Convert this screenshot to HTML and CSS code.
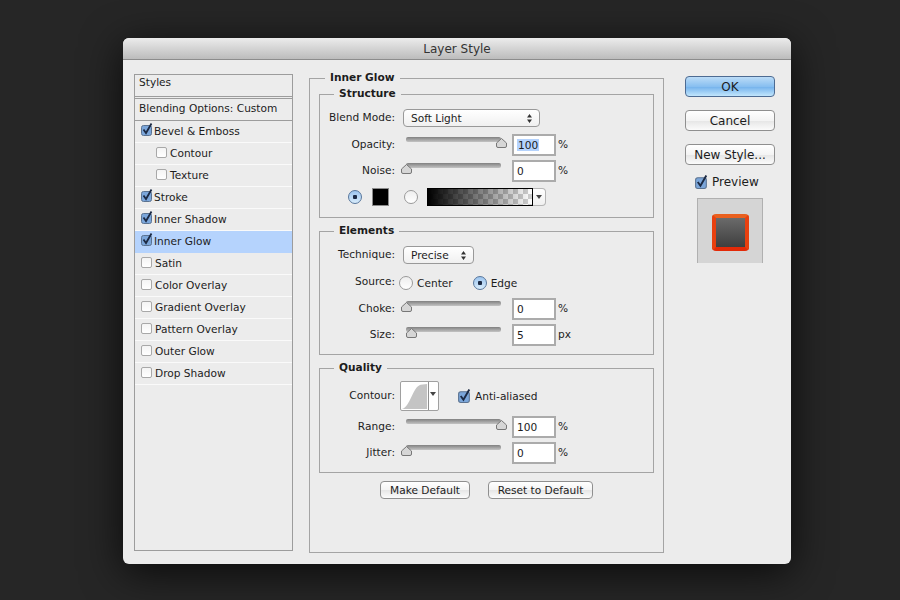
FILE: index.html
```html
<!DOCTYPE html>
<html lang="en">
<head>
    <meta charset="UTF-8">
    <meta name="viewport" content="width=device-width, initial-scale=1.0">
    <title>Layer Style</title>
    <link rel="stylesheet" href="styles.css">
</head>
<body>
    <svg class="defs" width="0" height="0">
        <symbol id="tick" viewBox="0 0 14 14">
            <rect x="1.5" y="3.5" width="10" height="10" rx="2" fill="#7ba6da" stroke="#5b7391"/>
            <path d="M3.5 7.5 L6 11 L11.5 1.5" fill="none" stroke="#1c2a44" stroke-width="1.8"/>
        </symbol>
        <symbol id="arrows" viewBox="0 0 7 11">
            <path d="M3.5 1 L6 4.5 H1 Z M3.5 10 L6 6.5 H1 Z" fill="#333"/>
        </symbol>
        <symbol id="thumb" viewBox="0 0 11 10">
            <path d="M5.5 .5 L10.5 5 V8 Q10.5 9.5 9 9.5 H2 Q.5 9.5 .5 8 V5 Z" fill="#d6d6d6" stroke="#777"/>
        </symbol>
    </svg>

    <div class="dialog">
        <div class="titlebar">Layer Style</div>
        <div class="main">
            <div class="style-list">
                <div class="list-head">Styles</div>
                <div class="list-head blending">Blending Options: Custom</div>
                <div class="item"><svg class="tick"><use href="#tick"/></svg>Bevel &amp; Emboss</div>
                <div class="item sub"><span class="box"></span>Contour</div>
                <div class="item sub"><span class="box"></span>Texture</div>
                <div class="item"><svg class="tick"><use href="#tick"/></svg>Stroke</div>
                <div class="item"><svg class="tick"><use href="#tick"/></svg>Inner Shadow</div>
                <div class="item selected"><svg class="tick"><use href="#tick"/></svg>Inner Glow</div>
                <div class="item"><span class="box"></span>Satin</div>
                <div class="item"><span class="box"></span>Color Overlay</div>
                <div class="item"><span class="box"></span>Gradient Overlay</div>
                <div class="item"><span class="box"></span>Pattern Overlay</div>
                <div class="item"><span class="box"></span>Outer Glow</div>
                <div class="item"><span class="box"></span>Drop Shadow</div>
            </div>

            <fieldset class="panel">
                <legend>Inner Glow</legend>

                <fieldset class="group structure">
                    <legend>Structure</legend>
                    <div class="row select-row">
                        <label>Blend Mode:</label>
                        <div class="select blend">Soft Light<svg class="arrows"><use href="#arrows"/></svg></div>
                    </div>
                    <div class="row">
                        <label>Opacity:</label>
                        <div class="slider"><svg class="thumb" style="left: 96px"><use href="#thumb"/></svg></div>
                        <div class="input"><span class="highlight">100</span></div>
                        <span class="unit">%</span>
                    </div>
                    <div class="row">
                        <label>Noise:</label>
                        <div class="slider"><svg class="thumb" style="left: 1px"><use href="#thumb"/></svg></div>
                        <div class="input">0</div>
                        <span class="unit">%</span>
                    </div>
                    <div class="fill-row">
                        <span class="radio on"></span>
                        <span class="swatch"></span>
                        <span class="radio"></span>
                        <span class="gradient"></span>
                        <span class="gradient-drop"></span>
                    </div>
                </fieldset>

                <fieldset class="group elements">
                    <legend>Elements</legend>
                    <div class="row select-row">
                        <label>Technique:</label>
                        <div class="select technique">Precise<svg class="arrows"><use href="#arrows"/></svg></div>
                    </div>
                    <div class="row source-row">
                        <label>Source:</label>
                        <span class="radio"></span><span class="radio-text center">Center</span>
                        <span class="radio on"></span><span class="radio-text">Edge</span>
                    </div>
                    <div class="row">
                        <label>Choke:</label>
                        <div class="slider"><svg class="thumb" style="left: 1px"><use href="#thumb"/></svg></div>
                        <div class="input">0</div>
                        <span class="unit">%</span>
                    </div>
                    <div class="row">
                        <label>Size:</label>
                        <div class="slider"><svg class="thumb" style="left: 6px"><use href="#thumb"/></svg></div>
                        <div class="input">5</div>
                        <span class="unit">px</span>
                    </div>
                </fieldset>

                <fieldset class="group quality">
                    <legend>Quality</legend>
                    <div class="row contour-row">
                        <label>Contour:</label>
                        <div class="contour">
                            <svg class="curve" viewBox="0 0 29 28">
                                <path d="M1 28 C10 26 12 5 21 2 L28 1 V28 Z" fill="#c4c4c4"/>
                            </svg>
                            <span class="contour-drop"></span>
                        </div>
                        <svg class="tick big"><use href="#tick"/></svg>
                        <span class="aa-text">Anti-aliased</span>
                    </div>
                    <div class="row">
                        <label>Range:</label>
                        <div class="slider"><svg class="thumb" style="left: 96px"><use href="#thumb"/></svg></div>
                        <div class="input">100</div>
                        <span class="unit">%</span>
                    </div>
                    <div class="row">
                        <label>Jitter:</label>
                        <div class="slider"><svg class="thumb" style="left: 1px"><use href="#thumb"/></svg></div>
                        <div class="input">0</div>
                        <span class="unit">%</span>
                    </div>
                </fieldset>

                <div class="defaults">
                    <button class="small make">Make Default</button>
                    <button class="small reset">Reset to Default</button>
                </div>
            </fieldset>

            <div class="actions">
                <button class="primary">OK</button>
                <button>Cancel</button>
                <button>New Style...</button>
                <div class="preview-check"><svg class="tick big"><use href="#tick"/></svg>Preview</div>
                <div class="preview-tile"><div class="preview-shape"></div></div>
            </div>
        </div>
    </div>
</body>
</html>
```

FILE: styles.css
```css
* {
    box-sizing: border-box;
}
html, body {
    height: 100%;
}
body {
    margin: 0;
    padding: 38px 0 0 123px;
    background: #262626;
    font-family: "DejaVu Sans", sans-serif;
    font-size: 10.6px;
    color: #1c1c1c;
    overflow: hidden;
}
.defs {
    display: block;
    height: 0;
}
.dialog {
    width: 668px;
    height: 526px;
    background: #ececec;
    border-radius: 6px;
    box-shadow: 0 8px 40px rgba(0, 0, 0, 0.75);
    overflow: hidden;
}
.titlebar {
    height: 22px;
    line-height: 22px;
    text-align: center;
    font-size: 12px;
    color: #333;
    background: linear-gradient(#ececec, #bcbcbc);
    border-bottom: 1px solid #8c8c8c;
}
.main {
    display: flex;
    align-items: flex-start;
    padding-left: 11px;
}

/* left list */
.style-list {
    width: 159px;
    height: 477px;
    margin-top: 14px;
    margin-right: 16px;
    border: 1px solid #9c9c9c;
}
.list-head {
    height: 22px;
    padding-left: 4px;
    border-bottom: 1px solid #9c9c9c;
    line-height: 14px;
}
.list-head.blending {
    height: 23px;
    padding-top: 2px;
    border-top: 1px solid #9c9c9c;
    margin-top: 1px;
}
.item {
    display: flex;
    align-items: center;
    height: 22px;
    padding: 0 0 2px 6px;
    border-bottom: 1px solid #fafafa;
}
.item.sub {
    padding-left: 21px;
}
.item.selected {
    background: #b5d3fd;
    border-bottom-color: #b5d3fd;
}
.box {
    width: 11px;
    height: 11px;
    margin-right: 3px;
    flex: none;
    background: linear-gradient(#f4f4f4, #fff);
    border: 1px solid #a8a8a8;
    border-radius: 2px;
}
.tick {
    width: 14px;
    height: 14px;
    flex: none;
    margin: -3px 0 0 -1px;
}

/* fieldsets */
fieldset {
    margin: 0;
    min-width: 0;
    border: 1px solid #a4a4a4;
}
legend {
    font-weight: bold;
    line-height: 12px;
    padding: 0 5px 2px;
}
.panel {
    width: 355px;
    height: 482px;
    margin-top: 11px;
    padding: 2px 0 0 9px;
    flex: none;
}
.panel > legend {
    margin-left: 6px;
}
.group {
    width: 335px;
    padding: 0;
}
.group > legend {
    margin-left: 14px;
}
.structure {
    height: 131px;
    padding-top: 8px;
}
.elements {
    height: 131px;
    margin-top: 6px;
    padding-top: 8px;
}
.quality {
    height: 112px;
    margin-top: 6px;
    padding-top: 6px;
}

/* rows */
.row {
    display: flex;
    align-items: center;
    height: 22px;
    margin-bottom: 4px;
}
.row label {
    width: 75px;
    flex: none;
    text-align: right;
    padding-bottom: 2px;
}
.select-row {
    height: 18px;
    margin-bottom: 7px;
}
.select {
    display: flex;
    align-items: center;
    justify-content: space-between;
    height: 18px;
    margin-left: 8px;
    padding: 0 6px 0 7px;
    background: linear-gradient(#ffffff, #f0f0f0);
    border: 1px solid #999;
    border-radius: 4px;
}
.select.blend {
    width: 137px;
}
.select.technique {
    width: 71px;
}
.arrows {
    width: 7px;
    height: 11px;
}
.slider {
    position: relative;
    width: 112px;
    height: 22px;
    margin-left: 5px;
    flex: none;
}
.slider::before {
    content: "";
    display: block;
    width: 95px;
    height: 5px;
    margin: 3px 0 0 6px;
    background: linear-gradient(#808080, #c4c4c4);
    border-radius: 2px;
}
.thumb {
    position: absolute;
    top: 4px;
    width: 11px;
    height: 10px;
}
.input {
    width: 44px;
    height: 22px;
    flex: none;
    padding: 1px 0 0 3px;
    background: #fff;
    border: 2px solid #ababab;
    line-height: 16px;
}
.highlight {
    background: #b5d3fd;
    padding: 0 1px;
}
.unit {
    margin-left: 2px;
    padding-bottom: 2px;
}
.source-row {
    height: 18px;
    margin-top: 10px;
    margin-bottom: 6px;
}
.source-row label {
    padding-bottom: 4px;
}
.source-row .radio {
    margin-left: 4px;
}
.radio-text {
    margin-left: 4px;
}
.radio-text.center {
    margin-right: 20px;
}
.source-row .radio-text.center + .radio {
    margin-left: 0;
}
.radio {
    width: 14px;
    height: 14px;
    flex: none;
    border-radius: 50%;
    background: linear-gradient(#eeeeee, #ffffff);
    border: 1px solid #9a9a9a;
}
.radio.on {
    background: radial-gradient(circle, #1c2a44 0 2px, transparent 2.5px), linear-gradient(#9cc4ee, #d8ecfb);
    border-color: #58769c;
}
.fill-row {
    display: flex;
    align-items: center;
    height: 18px;
    margin-top: 6px;
    padding-left: 28px;
}
.swatch {
    width: 17px;
    height: 18px;
    margin-left: 10px;
    background: #000;
    border: 1px solid #8a8a8a;
}
.fill-row .radio:nth-child(3) {
    margin-left: 15px;
}
.gradient {
    width: 106px;
    height: 18px;
    margin-left: 9px;
    border: 1px solid #000;
    background:
        linear-gradient(90deg, #000, rgba(0, 0, 0, 0)),
        conic-gradient(#d0d0d0 25%, #fff 0 50%, #d0d0d0 0 75%, #fff 0) 0 0 / 10px 10px;
}
.gradient-drop {
    position: relative;
    width: 13px;
    height: 18px;
    background: linear-gradient(#fff, #f0f0f0);
    border: 1px solid #b5b5b5;
    border-left: 0;
    border-radius: 0 4px 4px 0;
}
.gradient-drop::after,
.contour-drop::after {
    content: "";
    position: absolute;
    left: 3px;
    top: 6px;
    border: 3px solid transparent;
    border-top: 4px solid #444;
    border-bottom: 0;
}
.contour-row {
    height: 30px;
    margin-bottom: 5px;
}
.contour {
    display: flex;
    width: 39px;
    height: 30px;
    margin-left: 5px;
    background: #fff;
    border: 1px solid #a0a0a0;
    border-radius: 2px;
}
.curve {
    width: 28px;
    height: 28px;
    flex: none;
    border-right: 1px solid #8f8f8f;
}
.contour-drop {
    position: relative;
    flex: 1;
}
.contour-drop::after {
    top: 10px;
    left: 1px;
}
.tick.big {
    width: 15px;
    height: 15px;
}
.contour-row .tick.big {
    margin: -1px 0 0 18px;
}
.aa-text {
    margin-left: 3px;
}
.defaults {
    display: flex;
    justify-content: center;
    gap: 18px;
    width: 335px;
    margin-top: 8px;
}

/* buttons */
button {
    display: block;
    width: 90px;
    height: 21px;
    margin: 0 0 13px;
    padding: 0;
    font-family: "DejaVu Sans", sans-serif;
    font-size: 12px;
    color: #1c1c1c;
    background: linear-gradient(#ffffff, #f4f4f4 50%, #e6e6e6 52%, #fbfbfb);
    border: 1px solid #8f8f8f;
    border-radius: 4px;
}
button.primary {
    background: linear-gradient(#bcdcf7, #88bff0 50%, #74b2ec 52%, #c2e6fc);
    border-color: #4d6b92;
}
button.small {
    height: 18px;
    margin: 0;
    font-size: 10.6px;
}
button.make {
    width: 90px;
}
button.reset {
    width: 105px;
}
.actions {
    width: 90px;
    margin-top: 16px;
    margin-left: 21px;
    flex: none;
}
.preview-check {
    display: flex;
    align-items: center;
    height: 16px;
    margin: -4px 0 8px 9px;
    font-size: 12px;
}
.preview-check .tick.big {
    margin: -2px 3px 0 0;
}
.preview-tile {
    display: flex;
    justify-content: center;
    width: 66px;
    height: 65px;
    margin-left: 12px;
    padding-top: 15px;
    background: #d5d5d5;
    border: 1px solid #b0b0b0;
    border-bottom: 0;
}
.preview-shape {
    width: 37px;
    height: 37px;
    border: 4px solid #e8400f;
    border-top-color: #e9601e;
    border-bottom-color: #e32a08;
    border-radius: 4px;
    background: linear-gradient(#6a6a6a, #3f3f3f);
}
```
